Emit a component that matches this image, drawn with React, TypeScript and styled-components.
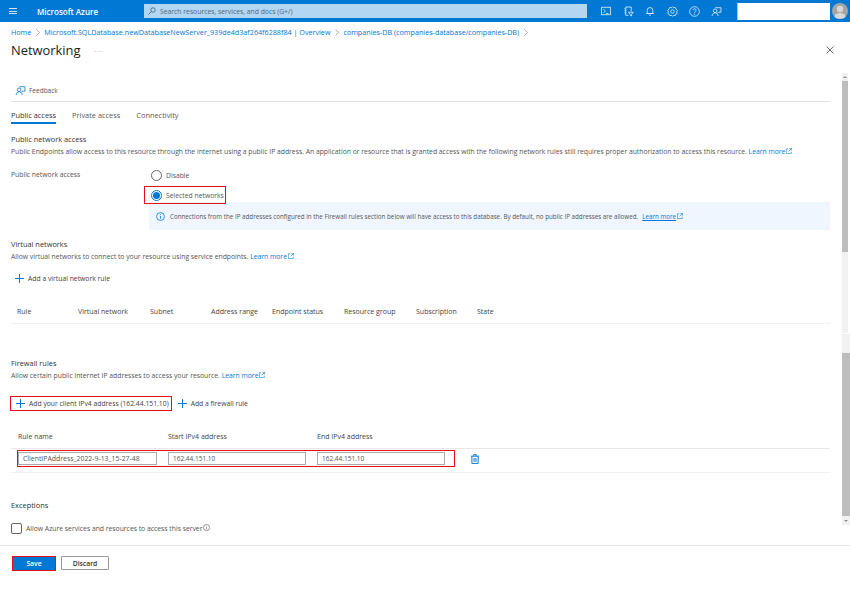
import React from "react";
import styled, { createGlobalStyle } from "styled-components";

const Global = createGlobalStyle`
  html, body { margin: 0; padding: 0; background: #fff; overflow: hidden; }
  body { font-family: "Open Sans", "Noto Sans", sans-serif; font-size: 6.8px; color: #4a4a4a; }
`;

const Page = styled.div`
  width: 850px; height: 605px; position: relative; overflow: hidden; display: flex; flex-direction: column;
`;
const TopBar = styled.header`
  height: 22px; background: #0078d4; display: flex; align-items: center; color: #fff;
`;
const Burger = styled.div`
  width: 8px; height: 4px; margin-left: 9px; border-top: 1px solid #cfe4f6; border-bottom: 1px solid #cfe4f6; position: relative;
  &::after { content: ""; position: absolute; left: 0; right: 0; top: 1.5px; height: 1px; background: #cfe4f6; }
`;
const Brand = styled.div`
  margin-left: 20px; width: 107px; font-size: 8px; font-weight: 600; white-space: nowrap;
`;
const Search = styled.div`
  width: 443px; height: 14px; background: #b3d6f2; display: flex; align-items: center; gap: 4px; padding-left: 4px; box-sizing: border-box; color: #50687c; font-size: 6.8px;
`;
const TopIcons = styled.div`
  margin-left: 8px; width: 142px; display: flex; align-items: center;
`;
const IconSlot = styled.div`
  width: 22px; display: flex; justify-content: center;
`;
const UserBox = styled.div`
  width: 92px; height: 17px; background: #fff; border-left: 1px solid #9ccbf0;
`;
const Avatar = styled.div`
  width: 16px; height: 16px; border-radius: 50%; background: #a5a5a5; margin-left: 2px; overflow: hidden;
`;
const Crumbs = styled.nav`
  height: 20px; padding-left: 11px; display: flex; align-items: center; gap: 4.5px; color: #0078d4; font-size: 7.2px; white-space: nowrap;
`;
const TitleRow = styled.div`
  height: 16px; padding: 0 16px 0 11px; display: flex; align-items: center;
`;
const Title = styled.h1`
  margin: 0; font-size: 12.9px; font-weight: 400; color: #1b1b1b;
`;
const Dots = styled.span`
  margin-left: 14px; color: #a0a0a0; font-size: 8px; flex: 1; letter-spacing: .5px;
`;
const Toolbar = styled.div`
  margin: 21px 20px 0 11px; height: 23px; padding: 1px 0 0 4px; border-bottom: 1px solid #e1e1e1; display: flex; align-items: center; gap: 3px; box-sizing: border-box; color: #555; font-size: 6.5px;
`;
const Tabs = styled.div`
  margin: 0 0 0 11px; height: 22px; display: flex; gap: 16px; font-size: 7.4px;
`;
const Tab = styled.div<{ $active?: boolean }>`
  height: 22px; padding-top: 4px; line-height: 18px; box-sizing: border-box; color: ${(p) => (p.$active ? "#333" : "#5a5a5a")};
  border-bottom: ${(p) => (p.$active ? "2px solid #0078d4" : "none")};
`;
const Section = styled.section<{ $top: number }>`
  margin-top: ${(p) => p.$top}px; padding-left: 11px; display: flex; flex-direction: column;
`;
const SectionTitle = styled.h2`
  margin: 0; height: 12px; line-height: 12px; font-size: 7.4px; font-weight: 500; color: #333;
`;
const Desc = styled.p`
  margin: 0; height: 12px; line-height: 13px; color: #555; white-space: nowrap;
`;
const Link = styled.span<{ $underline?: boolean }>`
  color: #0078d4; text-decoration: ${(p) => (p.$underline ? "underline" : "none")};
`;
const RadioGrid = styled.div`
  margin-top: 9px; display: grid; grid-template-columns: 138px 1fr;
`;
const FieldLabel = styled.div`
  line-height: 12px; padding-top: 3px; color: #555;
`;
const RadioCol = styled.div`
  display: flex; flex-direction: column; align-items: flex-start; gap: 2px; position: relative; z-index: 1;
`;
const RadioItem = styled.div<{ $marked?: boolean }>`
  display: flex; align-items: center; gap: 4px; height: 18px; box-sizing: border-box; color: #555;
  padding: 0 1px 0 ${(p) => (p.$marked ? 6 : 2)}px;
  margin-left: ${(p) => (p.$marked ? -5 : 0)}px;
  border: ${(p) => (p.$marked ? "1px solid #e0101c" : "none")};
`;
const Radio = styled.span<{ $on?: boolean }>`
  width: 11px; height: 11px; border-radius: 50%; box-sizing: border-box; border: 1px solid ${(p) => (p.$on ? "#0078d4" : "#666")};
  display: flex; align-items: center; justify-content: center;
  &::after { content: ""; width: 7px; height: 7px; border-radius: 50%; background: ${(p) => (p.$on ? "#0078d4" : "transparent")}; }
`;
const Info = styled.div`
  margin: -2px 20px 0 138px; height: 28px; background: #eff6ff; display: flex; align-items: center; gap: 5px; padding-left: 7px; color: #555; font-size: 6.26px;
`;
const InfoLink = styled(Link)`
  margin-left: 4px;
`;
const AddRow = styled.div<{ $top: number }>`
  margin-top: ${(p) => p.$top}px; height: 15px; display: flex; align-items: center; gap: 2px; color: #444;
`;
const AddButton = styled.div<{ $marked?: boolean }>`
  display: flex; align-items: center; gap: 4px; height: 15px; box-sizing: border-box; white-space: nowrap;
  padding: 0 2px 0 ${(p) => (p.$marked ? 5 : 4)}px; margin-left: ${(p) => (p.$marked ? -1 : 0)}px;
  border: ${(p) => (p.$marked ? "1px solid #e0101c" : "none")};
`;
const VnetHead = styled.div`
  margin: 14px 20px 0 0; height: 23px; padding-left: 6px; display: grid; align-items: center; border-bottom: 1px solid #f1f1f1;
  grid-template-columns: 61px 72px 61px 61px 72px 72px 61px 40px; color: #444; font-weight: 500; font-size: 7px;
`;
const RuleHead = styled.div`
  margin: 16px 20px 0 0; height: 22px; padding: 0 0 3px 7px; box-sizing: border-box; display: grid; align-items: center; border-bottom: 1px solid #e8e8e8;
  grid-template-columns: 150px 149px 1fr; color: #444; font-weight: 500; font-size: 7px;
`;
const RuleRow = styled.div`
  margin: 0 20px 0 0; height: 24px; border-bottom: 1px solid #f1f1f1; display: flex; align-items: center; padding: 0 0 4px 6px; box-sizing: border-box;
`;
const Marked = styled.div`
  width: 438px; height: 17px; box-sizing: border-box; border: 1px solid #e0101c; display: grid; grid-template-columns: 150px 149px 1fr; align-items: center;
`;
const RuleInput = styled.div<{ $w: number; $size: number }>`
  width: ${(p) => p.$w}px; height: 13px; line-height: 12px; box-sizing: border-box; border: 1px solid #aaa; padding-left: 4px; color: #555; font-size: ${(p) => p.$size}px; white-space: nowrap;
`;
const Trash = styled.div`
  margin-left: 15px; display: flex;
`;
const CheckRow = styled.div`
  margin-top: 11px; height: 12px; display: flex; align-items: center; gap: 4px; color: #555;
`;
const Check = styled.span`
  width: 11px; height: 11px; box-sizing: border-box; border: 1px solid #666; border-radius: 2px;
`;
const Hint = styled.span`
  display: flex; margin: 0 0 2px -3px;
`;
const Footer = styled.footer`
  margin-top: 11px; flex: 1; border-top: 1px solid #e6e6e6; display: flex; align-items: flex-start; gap: 5px; padding: 10px 0 0 12px;
`;
const Save = styled.button`
  width: 44px; height: 15px; padding: 0; box-sizing: border-box; background: #0078d4; color: #fff; border: 1px solid #e0101c; font: 600 6.8px "Open Sans", sans-serif;
`;
const Discard = styled.button`
  width: 48px; height: 14px; padding: 0; box-sizing: border-box; background: #fff; color: #333; border: 1px solid #999; border-radius: 1px; font: 600 6.8px "Open Sans", sans-serif;
`;
const Close = styled.div`
  display: flex;
`;
const ScrollTrack = styled.div<{ $top: number; $h: number; $w: number }>`
  position: absolute; left: 842px; top: ${(p) => p.$top}px; height: ${(p) => p.$h}px; width: ${(p) => p.$w}px; background: #f1f1f1;
`;
const ScrollThumb = styled.div<{ $top: number; $h: number }>`
  position: absolute; left: 0; right: 0; top: ${(p) => p.$top}px; height: ${(p) => p.$h}px; background: #bdbdbd;
`;
const ScrollArrow = styled.div<{ $down?: boolean }>`
  position: absolute; left: 50%; margin-left: -2px; width: 0; height: 0;
  border-left: 2px solid transparent; border-right: 2px solid transparent;
  ${(p) => (p.$down ? "bottom: 3px; border-top: 2px solid #8a8a8a;" : "top: 3px; border-bottom: 2px solid #8a8a8a;")}
`;

const Ic = ({ w = 11, c = "#e8f2fb", sw = 0.8, children }: { w?: number; c?: string; sw?: number; children: React.ReactNode }) => (
  <svg width={w} height={w} viewBox="0 0 16 16" fill="none" stroke={c} strokeWidth={(sw * 16) / w} style={{ flex: "none" }}>
    {children}
  </svg>
);
const FeedbackGlyph = () => (
  <>
    <circle cx="6" cy="7" r="2.6" />
    <path d="M1.5 14.5c.5-3 2.3-4.6 4.5-4.6s4 1.6 4.500 4.6" />
    <path d="M6 2.500h8.500v6.500h-3.500l-2 2" />
  </>
);
const Plus = () => (
  <Ic w={9} c="#0078d4" sw={1}>
    <path d="M8 0v16M0 8h16" />
  </Ic>
);
const External = () => (
  <svg width="6" height="6" viewBox="0 0 8 8" fill="none" stroke="#0078d4" strokeWidth=".8" style={{ marginLeft: 1 }}>
    <path d="M3 1H.5v6.500H7V5M4.500.5h3v3M7.500.5 3.500 4.500" />
  </svg>
);
const Chevron = () => (
  <svg width="4" height="7" viewBox="0 0 4 7" fill="none" stroke="#8a8a8a" strokeWidth=".7" style={{ flex: "none" }}>
    <path d="M.5.5l3 3-3 3" />
  </svg>
);

export default function App() {
  return (
    <Page>
      <Global />
      <TopBar>
        <Burger />
        <Brand>Microsoft Azure</Brand>
        <Search>
          <Ic w={8} c="#40607a">
            <circle cx="10" cy="6" r="4.5" />
            <path d="M6.500 9.500 1 15" />
          </Ic>
          Search resources, services, and docs (G+/)
        </Search>
        <TopIcons>
          <IconSlot>
            <Ic w={10}>
              <rect x="1" y="2" width="14" height="12" />
              <path d="m4 5 3 3-3 3M8 12h4" />
            </Ic>
          </IconSlot>
          <IconSlot>
            <Ic w={11}>
              <path d="M4 1.500h8v6M4 1.500v12h4M2 4h2M2 7h2M2 10h2M8 9h7l-2.500 3v2.500l-2-1V12z" />
            </Ic>
          </IconSlot>
          <IconSlot>
            <Ic w={10}>
              <path d="M3.500 12V7a4.500 4.500 0 0 1 9 0v5zM2 12h12M6.500 14.500h3" />
            </Ic>
          </IconSlot>
          <IconSlot>
            <Ic w={11}>
              <path d="M8 1l1.500 1.500 2.500-.5 1 2.500 2 1.500-1 2.500 1 2-2 1.200-1 2.300-2.500-.5L8 15l-1.500-1.500-2.500.5-1-2.300L1 10.500l1-2-1-2.500 2-1.500 1-2.500 2.500.5z" />
              <circle cx="8" cy="8" r="2.5" />
            </Ic>
          </IconSlot>
          <IconSlot>
            <Ic w={11}>
              <circle cx="8" cy="8" r="7" />
              <path d="M5.800 6.200a2.200 2.200 0 1 1 3.400 1.900c-.8.500-1.200 1-1.200 2" />
              <circle cx="8" cy="12" r=".4" />
            </Ic>
          </IconSlot>
          <IconSlot>
            <Ic w={11}>
              <FeedbackGlyph />
            </Ic>
          </IconSlot>
        </TopIcons>
        <UserBox />
        <Avatar>
          <svg width="16" height="16" viewBox="0 0 16 16">
            <circle cx="8" cy="6" r="3.2" fill="#d8d8d8" />
            <path d="M2 16c0-4 2.500-6 6-6s6 2 6 6z" fill="#d8d8d8" />
          </svg>
        </Avatar>
      </TopBar>
      <Crumbs>
        <span>Home</span>
        <Chevron />
        <span>Microsoft.SQLDatabase.newDatabaseNewServer_939de4d3af264f6288f84 | Overview</span>
        <Chevron />
        <span>companies-DB (companies-database/companies-DB)</span>
        <Chevron />
      </Crumbs>
      <TitleRow>
        <Title>Networking</Title>
        <Dots>···</Dots>
        <Close>
          <Ic w={8} c="#444" sw={0.8}>
            <path d="M1 1l14 14M15 1 1 15" />
          </Ic>
        </Close>
      </TitleRow>
      <Toolbar>
        <Ic w={11} c="#0078d4">
          <FeedbackGlyph />
        </Ic>
        Feedback
      </Toolbar>
      <Tabs>
        <Tab $active>Public access</Tab>
        <Tab>Private access</Tab>
        <Tab>Connectivity</Tab>
      </Tabs>
      <Section $top={9}>
        <SectionTitle>Public network access</SectionTitle>
        <Desc>
          Public Endpoints allow access to this resource through the internet using a public IP address. An application or resource that is granted access with the following network rules still requires proper authorization to access this resource. <Link>Learn more</Link>
          <External />
        </Desc>
        <RadioGrid>
          <FieldLabel>Public network access</FieldLabel>
          <RadioCol>
            <RadioItem>
              <Radio />
              Disable
            </RadioItem>
            <RadioItem $marked>
              <Radio $on />
              Selected networks
            </RadioItem>
          </RadioCol>
        </RadioGrid>
        <Info>
          <Ic w={9} c="#0078d4">
            <circle cx="8" cy="8" r="7" />
            <path d="M8 7v5M8 4v1.500" />
          </Ic>
          <span>
            Connections from the IP addresses configured in the Firewall rules section below will have access to this database. By default, no public IP addresses are allowed.
            <InfoLink $underline>Learn more</InfoLink>
            <External />
          </span>
        </Info>
      </Section>
      <Section $top={8}>
        <SectionTitle>Virtual networks</SectionTitle>
        <Desc>
          Allow virtual networks to connect to your resource using service endpoints. <Link>Learn more</Link>
          <External />
        </Desc>
        <AddRow $top={9}>
          <AddButton>
            <Plus />
            Add a virtual network rule
          </AddButton>
        </AddRow>
        <VnetHead>
          <span>Rule</span>
          <span>Virtual network</span>
          <span>Subnet</span>
          <span>Address range</span>
          <span>Endpoint status</span>
          <span>Resource group</span>
          <span>Subscription</span>
          <span>State</span>
        </VnetHead>
      </Section>
      <Section $top={33}>
        <SectionTitle>Firewall rules</SectionTitle>
        <Desc>
          Allow certain public internet IP addresses to access your resource. <Link>Learn more</Link>
          <External />
        </Desc>
        <AddRow $top={15}>
          <AddButton $marked>
            <Plus />
            Add your client IPv4 address (162.44.151.10)
          </AddButton>
          <AddButton>
            <Plus />
            Add a firewall rule
          </AddButton>
        </AddRow>
        <RuleHead>
          <span>Rule name</span>
          <span>Start IPv4 address</span>
          <span>End IPv4 address</span>
        </RuleHead>
        <RuleRow>
          <Marked>
            <RuleInput $w={139} $size={6.9}>ClientIPAddress_2022-9-13_15-27-48</RuleInput>
            <RuleInput $w={138} $size={6.5}>162.44.151.10</RuleInput>
            <RuleInput $w={128} $size={6.5}>162.44.151.10</RuleInput>
          </Marked>
          <Trash>
            <Ic w={10} c="#0078d4" sw={1}>
              <path d="M3 4v11h10V4M1.500 3.500h13M6 3V1h4v2M6.500 6.500v6M9.500 6.500v6" />
            </Ic>
          </Trash>
        </RuleRow>
      </Section>
      <Section $top={26}>
        <SectionTitle>Exceptions</SectionTitle>
        <CheckRow>
          <Check />
          Allow Azure services and resources to access this server
          <Hint>
            <Ic w={7} c="#555" sw={0.6}>
              <circle cx="8" cy="8" r="7" />
              <path d="M8 7v5M8 4v1.500" />
            </Ic>
          </Hint>
        </CheckRow>
      </Section>
      <Footer>
        <Save>Save</Save>
        <Discard>Discard</Discard>
      </Footer>
      <ScrollTrack $top={73} $h={260} $w={6}>
        <ScrollArrow />
        <ScrollThumb $top={8} $h={171} />
      </ScrollTrack>
      <ScrollTrack $top={334} $h={191} $w={8}>
        <ScrollThumb $top={19} $h={163} />
        <ScrollArrow $down />
      </ScrollTrack>
    </Page>
  );
}
